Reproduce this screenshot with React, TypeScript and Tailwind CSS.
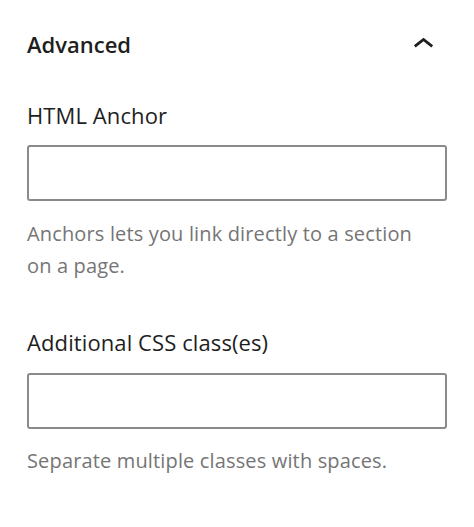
import React from "react";

function Field({
  label,
  help,
  labelMt,
  inputMt,
  helpMt,
}: {
  label: string;
  help: string;
  labelMt: string;
  inputMt: string;
  helpMt: string;
}) {
  return (
    <div className={labelMt}>
      <label className="block text-[22px] leading-[30px] text-[#1e1e1e] tracking-[0.1px]">{label}</label>
      <input
        type="text"
        className={`${inputMt} block w-full h-[56px] border-2 border-[#8a8a8a] rounded-[3px] bg-white outline-none`}
      />
      <p className={`${helpMt} pr-[14px] text-[20px] leading-[32px] tracking-[0.15px] text-[#757575]`}>{help}</p>
    </div>
  );
}

export default function App() {
  return (
    <div className="w-[474px] h-[527px] bg-white px-[27px] font-['Open_Sans',sans-serif] overflow-hidden">
      <div className="pt-[29px] flex items-center justify-between h-[59px]">
        <h2 className="text-[22px] leading-[30px] font-semibold text-[#1e1e1e]">Advanced</h2>
        <svg
          width="41"
          height="41"
          viewBox="0 0 24 24"
          className="mt-[1px] mr-[3px]"
          aria-hidden="true"
        >
          <path d="M6.4 12.5L12 8l5.6 4.5-1 1.25L12 10.1l-4.6 3.65-1-1.25z" fill="#1e1e1e" />
        </svg>
      </div>
      <Field
        label="HTML Anchor"
        help="Anchors lets you link directly to a section on a page."
        labelMt="mt-[41px]"
        inputMt="mt-[15px]"
        helpMt="mt-[17px]"
      />
      <Field
        label="Additional CSS class(es)"
        help="Separate multiple classes with spaces."
        labelMt="mt-[45px]"
        inputMt="mt-[16px]"
        helpMt="mt-[16px]"
      />
    </div>
  );
}
